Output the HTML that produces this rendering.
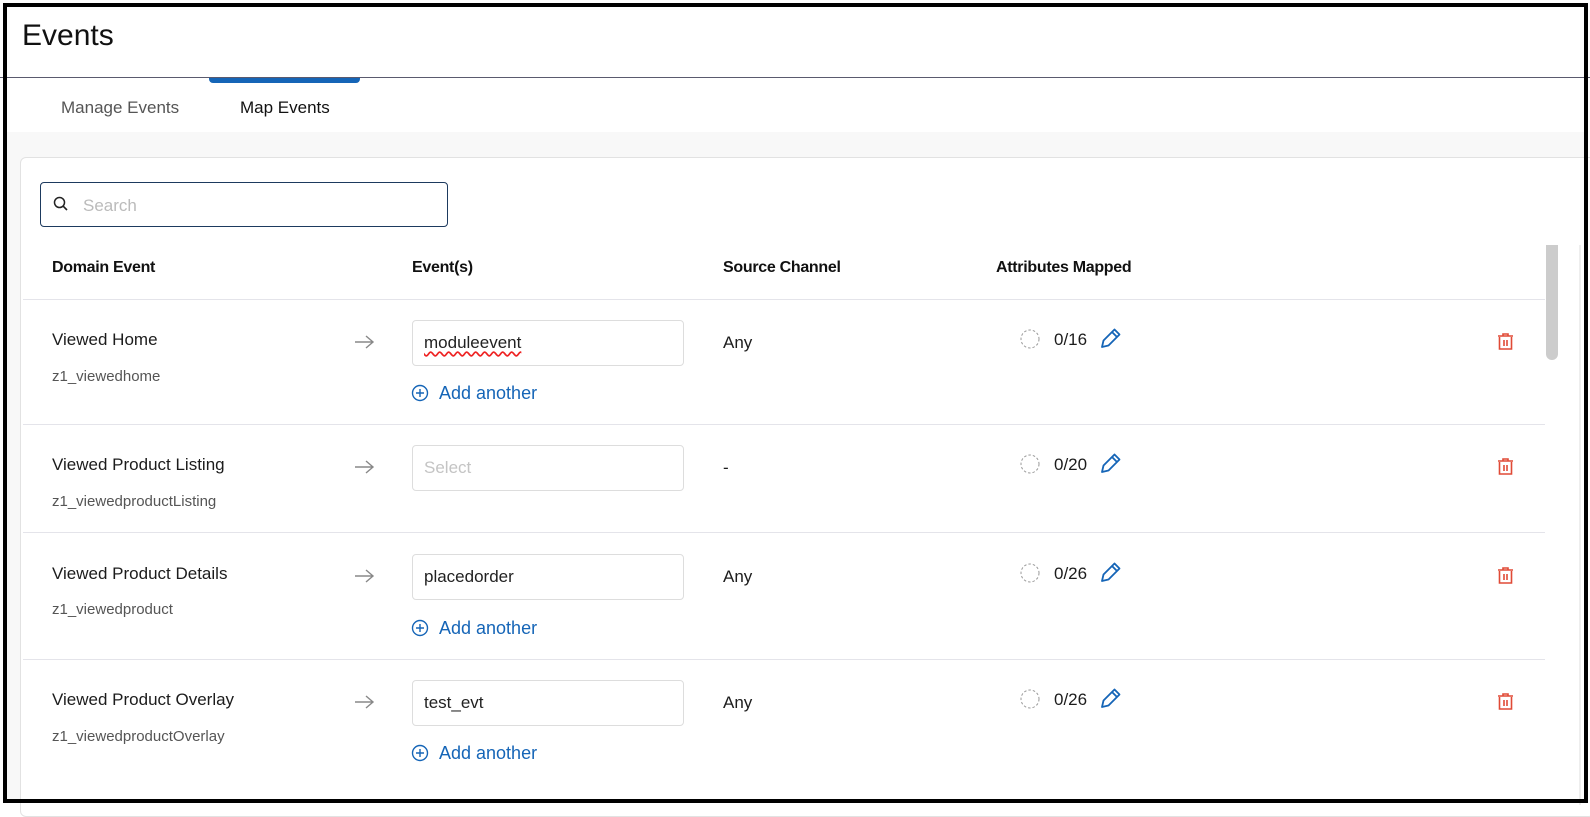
<!DOCTYPE html>
<html><head><meta charset="utf-8"><style>
*{margin:0;padding:0;box-sizing:border-box}
body{width:1590px;height:806px;background:#fff;font-family:"Liberation Sans",sans-serif;position:relative;overflow:hidden;color:#1a1a1a}
.a{position:absolute}
.frame{left:3px;top:3px;width:1585px;height:800px;border:4px solid #000}
.t{font-size:17px;color:#1c1c1c;white-space:nowrap}
.s{font-size:15px;color:#555;white-space:nowrap}
.h{font-size:16px;font-weight:bold;color:#111;letter-spacing:-0.3px}
.inp{left:412px;width:272px;height:46px;border:1px solid #ddd;border-radius:4px;font-size:17px;padding:12px 0 0 11px;color:#222}
.add{left:439px;font-size:18px;color:#1565b7;white-space:nowrap}
.div{left:23px;width:1522px;height:1px;background:#e4e4ea}
</style></head><body>
<div class="a" style="left:22px;top:19px;font-size:30px;color:#111">Events</div>
<div class="a" style="left:0;top:77px;width:1590px;height:1px;background:#5a5a6e"></div>
<div class="a" style="left:209px;top:78px;width:151px;height:5px;background:#1565b7;border-radius:0 0 4px 4px"></div>
<div class="a" style="left:61px;top:98px;font-size:17px;color:#555">Manage Events</div>
<div class="a" style="left:240px;top:98px;font-size:17px;color:#111">Map Events</div>
<div class="a" style="left:7px;top:132px;width:1580px;height:670px;background:#f8f8f8"></div>
<div class="a" style="left:20px;top:157px;width:1575px;height:660px;background:#fff;border:1px solid #e2e2e2;border-radius:6px"></div>
<div class="a" style="left:40px;top:182px;width:408px;height:45px;border:1px solid #1d3a5e;border-radius:4px"></div>
<svg class="a" style="left:53px;top:196px" width="16" height="16" viewBox="0 0 16 16"><circle cx="6.5" cy="6.5" r="5" fill="none" stroke="#222" stroke-width="1.5"/><path d="M10.2 10.2 14 14" stroke="#222" stroke-width="1.6"/></svg>
<div class="a" style="left:83px;top:196px;font-size:17px;color:#bbb">Search</div>
<div class="a h" style="left:52px;top:259px">Domain Event</div>
<div class="a h" style="left:412px;top:259px">Event(s)</div>
<div class="a h" style="left:723px;top:259px">Source Channel</div>
<div class="a h" style="left:996px;top:259px">Attributes Mapped</div>
<div class="a div" style="top:299px"></div>
<div class="a div" style="top:424px"></div>
<div class="a div" style="top:532px"></div>
<div class="a div" style="top:659px"></div>
<div class="a" style="left:1546px;top:245px;width:12px;height:115px;background:#ccc;border-radius:0 0 6px 6px"></div>
<div class="a" style="left:1579px;top:245px;width:2px;height:560px;background:#eee"></div>

<div class="a t" style="left:52px;top:330px">Viewed Home</div>
<div class="a s" style="left:52px;top:368px">z1_viewedhome</div>
<div class="a inp" style="top:320px"><span style="text-decoration:underline wavy #e22;text-underline-offset:3px">moduleevent</span></div>
<div class="a add" style="top:383px">Add another</div>
<div class="a t" style="left:723px;top:333px">Any</div>

<div class="a t" style="left:52px;top:455px">Viewed Product Listing</div>
<div class="a s" style="left:52px;top:493px">z1_viewedproductListing</div>
<div class="a inp" style="top:445px;color:#c4c4c4">Select</div>
<div class="a t" style="left:723px;top:458px">-</div>

<div class="a t" style="left:52px;top:564px">Viewed Product Details</div>
<div class="a s" style="left:52px;top:601px">z1_viewedproduct</div>
<div class="a inp" style="top:554px">placedorder</div>
<div class="a add" style="top:618px">Add another</div>
<div class="a t" style="left:723px;top:567px">Any</div>

<div class="a t" style="left:52px;top:690px">Viewed Product Overlay</div>
<div class="a s" style="left:52px;top:728px">z1_viewedproductOverlay</div>
<div class="a inp" style="top:680px">test_evt</div>
<div class="a add" style="top:743px">Add another</div>
<div class="a t" style="left:723px;top:693px">Any</div>

<svg class="a" style="left:0;top:0" width="1590" height="806">
<defs>
<g id="arr"><path d="M355 0h18M366 -6l7 6-7 6" stroke="#888" stroke-width="1.4" fill="none"/></g>
<g id="att"><circle cx="1030" cy="0" r="9" fill="none" stroke="#999" stroke-width="1" stroke-dasharray="2.5 2"/>
<path d="M1102 8l1.5-6.5 11-11 5 5-11 11z M1112 -7l5 5" fill="none" stroke="#1565b7" stroke-width="1.8" stroke-linejoin="round"/></g>
<g id="tr"><path d="M1498 -6h15M1503 -6v-2h5v2M1499.5 -5v12h12v-12M1504 -2v6M1507 -2v6" fill="none" stroke="#e04a36" stroke-width="1.6"/></g>
<g id="pl"><circle cx="420" cy="0" r="7.5" fill="none" stroke="#1565b7" stroke-width="1.4"/><path d="M416 0h8M420 -4v8" stroke="#1565b7" stroke-width="1.4"/></g>
</defs>
<use href="#arr" y="342"/><use href="#arr" y="467"/><use href="#arr" y="576"/><use href="#arr" y="702"/>
<use href="#att" y="339"/><use href="#att" y="464"/><use href="#att" y="573"/><use href="#att" y="699"/>
<use href="#tr" y="342"/><use href="#tr" y="467"/><use href="#tr" y="576"/><use href="#tr" y="702"/>
<use href="#pl" y="393"/><use href="#pl" y="628"/><use href="#pl" y="753"/>
</svg>
<div class="a t" style="left:1054px;top:330px">0/16</div>
<div class="a t" style="left:1054px;top:455px">0/20</div>
<div class="a t" style="left:1054px;top:564px">0/26</div>
<div class="a t" style="left:1054px;top:690px">0/26</div>

<div class="a frame"></div>
</body></html>
